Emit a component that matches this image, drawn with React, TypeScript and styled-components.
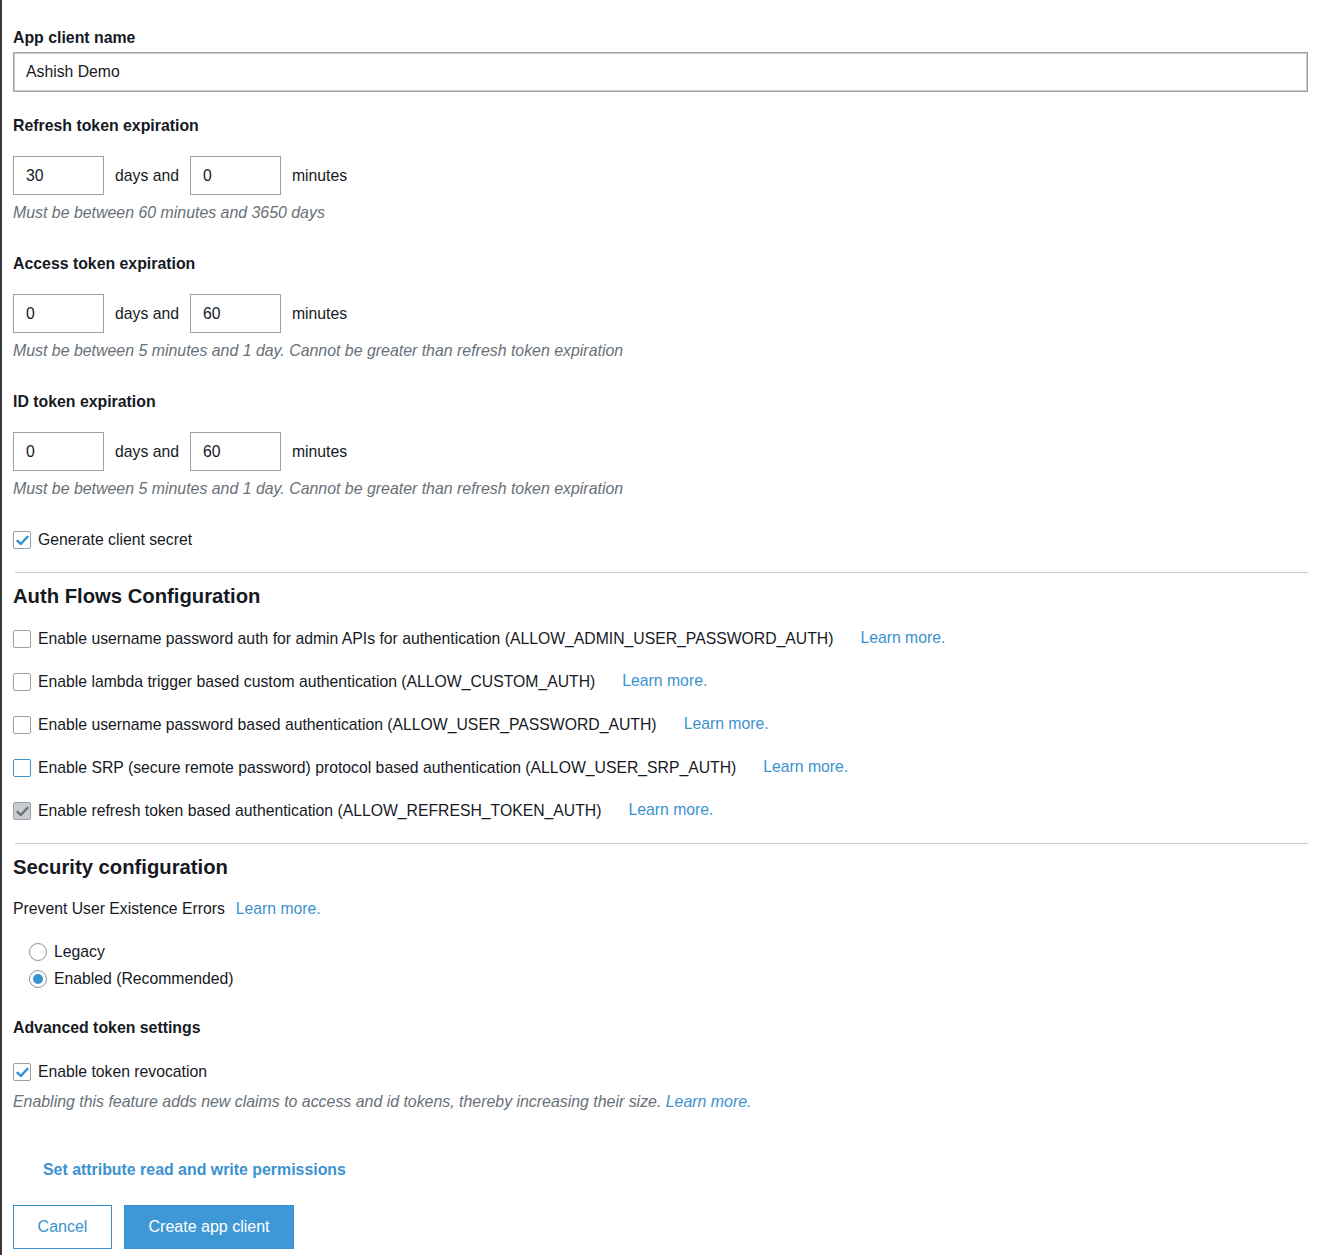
import React from "react";
import styled, { createGlobalStyle } from "styled-components";

const Global = createGlobalStyle`
  html, body { margin: 0; padding: 0; background: #fff; }
  body { font-family: "Liberation Sans", Arial, sans-serif; color: #16191f; }
`;

const Page = styled.div`
  width: 1338px;
  min-height: 1255px;
  box-sizing: border-box;
  border-left: 2px solid #3a3a3a;
  padding: 28px 30px 0 11px;
  display: flex;
  flex-direction: column;
  font-size: 15.75px;
`;

const Label = styled.div<{ $mt?: number }>`
  font-size: 15.85px;
  font-weight: bold;
  color: #16191f;
  line-height: 20px;
  margin-top: ${(p) => p.$mt ?? 0}px;
`;

const TextInput = styled.div`
  box-sizing: border-box;
  height: 40px;
  border: 1px solid #9ba1a6;
  box-shadow: inset 0 0 0 1px #c8cccf;
  margin-top: 4px;
  padding: 0 12px;
  display: flex;
  align-items: center;
`;

const TimeRow = styled.div`
  display: flex;
  align-items: center;
  margin-top: 20px;
  color: #16191f;
`;

const SmallInput = styled.div`
  box-sizing: border-box;
  width: 91px;
  height: 39px;
  border: 1px solid #9ba1a6;
  padding: 0 12px;
  display: flex;
  align-items: center;
`;

const Unit = styled.span`
  margin: 0 11px;
`;

const Hint = styled.div<{ $mt?: number }>`
  font-size: 15.9px;
  font-style: italic;
  color: #687078;
  line-height: 20px;
  margin-top: ${(p) => p.$mt ?? 8}px;
`;

const Link = styled.a`
  color: #3a92d0;
  text-decoration: none;
`;

const CheckRow = styled.label<{ $mt?: number }>`
  display: flex;
  align-items: center;
  line-height: 20px;
  color: #16191f;
  margin-top: ${(p) => p.$mt ?? 0}px;
`;

const Box = styled.span<{ $variant: "on" | "off" | "focus" | "disabled" }>`
  box-sizing: border-box;
  width: 18px;
  height: 18px;
  border-radius: 2px;
  border: 1px solid
    ${(p) => (p.$variant === "focus" ? "#3a92d0" : "#9ba1a6")};
  background: ${(p) => (p.$variant === "disabled" ? "#c9cdd1" : "#fff")};
  display: inline-flex;
  align-items: center;
  justify-content: center;
  margin-right: 7px;
  flex-shrink: 0;
`;

const Checkbox = ({ variant }: { variant: "on" | "off" | "focus" | "disabled" }) => (
  <Box $variant={variant}>
    {(variant === "on" || variant === "disabled") && (
      <svg width="13" height="11" viewBox="0 0 13 11">
        <path
          d="M1.5 5.8 L4.8 9 L11.5 1.8"
          fill="none"
          stroke={variant === "on" ? "#2f8fd6" : "#6b7177"}
          strokeWidth="2.4"
          strokeLinecap="round"
          strokeLinejoin="round"
        />
      </svg>
    )}
  </Box>
);

const Divider = styled.hr<{ $mt: number }>`
  border: none;
  border-top: 1px solid #c6cacd;
  margin: ${(p) => p.$mt}px 0 0 2px;
`;

const Heading = styled.h2<{ $mt: number }>`
  font-size: 20.25px;
  font-weight: bold;
  margin: ${(p) => p.$mt}px 0 0 0;
  line-height: 24px;
  color: #16191f;
`;

const FlowList = styled.div`
  display: flex;
  flex-direction: column;
  gap: 23px;
  margin-top: 21px;
`;

const FlowLink = styled(Link)`
  margin-left: 27px;
  margin-top: -2px;
`;

const Prevent = styled.div`
  color: #16191f;
  margin-top: 20px;
  line-height: 20px;
  display: flex;
  gap: 11px;
`;

const RadioGroup = styled.div`
  display: flex;
  flex-direction: column;
  gap: 7px;
  margin: 23px 0 0 16px;
`;

const RadioDot = styled.span<{ $on?: boolean }>`
  box-sizing: border-box;
  width: 18px;
  height: 18px;
  border-radius: 50%;
  border: 1px solid #8d9399;
  background: #fff;
  margin-right: 7px;
  display: inline-flex;
  align-items: center;
  justify-content: center;
  &::after {
    content: "";
    width: 10px;
    height: 10px;
    border-radius: 50%;
    background: ${(p) => (p.$on ? "#3a92d0" : "transparent")};
  }
`;

const PermLink = styled(Link)`
  font-weight: bold;
  font-size: 15.9px;
  margin: 48px 0 0 30px;
  line-height: 20px;
`;

const Buttons = styled.div`
  display: flex;
  gap: 12px;
  margin-top: 25px;
`;

const Button = styled.button<{ $primary?: boolean }>`
  box-sizing: border-box;
  height: 44px;
  font-family: "Liberation Sans", Arial, sans-serif;
  font-size: 16px;
  padding: 0;
  border: 1px solid #3a92d0;
  background: ${(p) => (p.$primary ? "#3f98d6" : "#fff")};
  color: ${(p) => (p.$primary ? "#fff" : "#3a92d0")};
  width: ${(p) => (p.$primary ? "170px" : "99px")};
`;

const flows: { text: string; variant: "on" | "off" | "focus" | "disabled" }[] = [
  { text: "Enable username password auth for admin APIs for authentication (ALLOW_ADMIN_USER_PASSWORD_AUTH)", variant: "off" },
  { text: "Enable lambda trigger based custom authentication (ALLOW_CUSTOM_AUTH)", variant: "off" },
  { text: "Enable username password based authentication (ALLOW_USER_PASSWORD_AUTH)", variant: "off" },
  { text: "Enable SRP (secure remote password) protocol based authentication (ALLOW_USER_SRP_AUTH)", variant: "focus" },
  { text: "Enable refresh token based authentication (ALLOW_REFRESH_TOKEN_AUTH)", variant: "disabled" },
];

const Expiry = ({ label, days, minutes, hint, mt }: { label: string; days: string; minutes: string; hint: string; mt: number }) => (
  <>
    <Label $mt={mt}>{label}</Label>
    <TimeRow>
      <SmallInput>{days}</SmallInput>
      <Unit>days and</Unit>
      <SmallInput>{minutes}</SmallInput>
      <Unit>minutes</Unit>
    </TimeRow>
    <Hint>{hint}</Hint>
  </>
);

export default function App() {
  return (
    <Page>
      <Global />
      <Label>App client name</Label>
      <TextInput>Ashish Demo</TextInput>
      <Expiry mt={24} label="Refresh token expiration" days="30" minutes="0" hint="Must be between 60 minutes and 3650 days" />
      <Expiry mt={31} label="Access token expiration" days="0" minutes="60" hint="Must be between 5 minutes and 1 day. Cannot be greater than refresh token expiration" />
      <Expiry mt={31} label="ID token expiration" days="0" minutes="60" hint="Must be between 5 minutes and 1 day. Cannot be greater than refresh token expiration" />
      <CheckRow $mt={31}>
        <Checkbox variant="on" />
        Generate client secret
      </CheckRow>
      <Divider $mt={22} />
      <Heading $mt={11}>Auth Flows Configuration</Heading>
      <FlowList>
        {flows.map((f) => (
          <CheckRow key={f.text}>
            <Checkbox variant={f.variant} />
            {f.text}
            <FlowLink href="#">Learn more.</FlowLink>
          </CheckRow>
        ))}
      </FlowList>
      <Divider $mt={22} />
      <Heading $mt={11}>Security configuration</Heading>
      <Prevent>
        Prevent User Existence Errors <Link href="#">Learn more.</Link>
      </Prevent>
      <RadioGroup>
        <CheckRow>
          <RadioDot />
          Legacy
        </CheckRow>
        <CheckRow>
          <RadioDot $on />
          Enabled (Recommended)
        </CheckRow>
      </RadioGroup>
      <Label $mt={29}>Advanced token settings</Label>
      <CheckRow $mt={24}>
        <Checkbox variant="on" />
        Enable token revocation
      </CheckRow>
      <Hint $mt={10}>
        Enabling this feature adds new claims to access and id tokens, thereby increasing their size. <Link href="#">Learn more.</Link>
      </Hint>
      <PermLink href="#">Set attribute read and write permissions</PermLink>
      <Buttons>
        <Button>Cancel</Button>
        <Button $primary>Create app client</Button>
      </Buttons>
    </Page>
  );
}
